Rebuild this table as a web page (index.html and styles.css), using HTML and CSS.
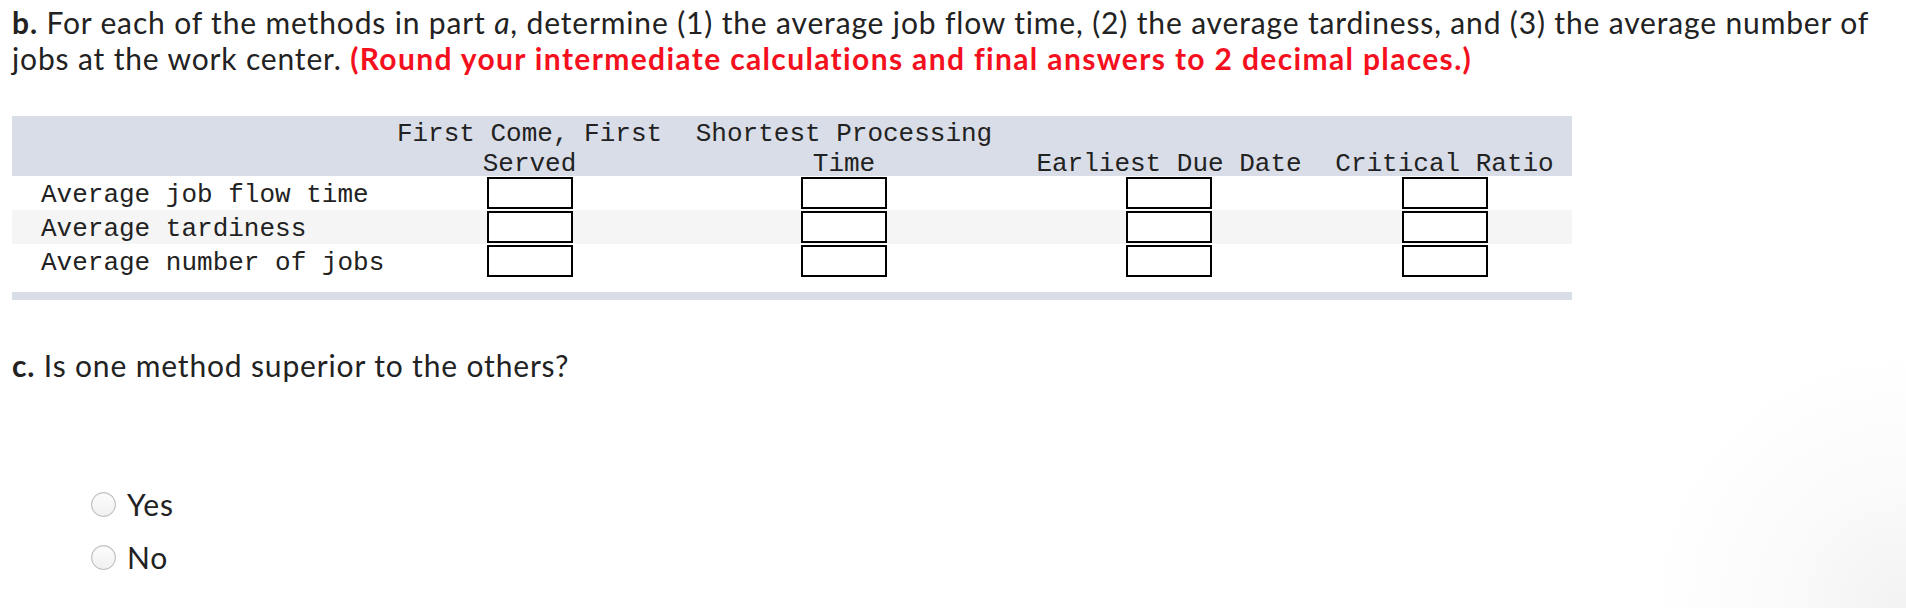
FILE: index.html
```html
<!DOCTYPE html>
<html>
<head>
<meta charset="utf-8">
<link rel="stylesheet" href="styles.css">
</head>
<body>
<div class="page">
  <p class="question intro"><b>b.</b> <span>For each of the methods in part</span> <i>a</i><span>, determine (1) the average job flow time, (2) the average tardiness, and (3) the average number of</span><br><span>jobs at the work center.</span> <span class="note">(Round your intermediate calculations and final answers to 2 decimal places.)</span></p>

  <div class="table">
    <div class="head">
      <div class="hcell label"></div>
      <div class="hcell">First Come, First<br>Served</div>
      <div class="hcell">Shortest Processing<br>Time</div>
      <div class="hcell">Earliest Due Date</div>
      <div class="hcell">Critical Ratio</div>
    </div>
    <div class="row">
      <div class="cell label">Average job flow time</div>
      <div class="cell"><span class="box"></span></div>
      <div class="cell"><span class="box"></span></div>
      <div class="cell"><span class="box"></span></div>
      <div class="cell"><span class="box"></span></div>
    </div>
    <div class="row alt">
      <div class="cell label">Average tardiness</div>
      <div class="cell"><span class="box"></span></div>
      <div class="cell"><span class="box"></span></div>
      <div class="cell"><span class="box"></span></div>
      <div class="cell"><span class="box"></span></div>
    </div>
    <div class="row">
      <div class="cell label">Average number of jobs</div>
      <div class="cell"><span class="box"></span></div>
      <div class="cell"><span class="box"></span></div>
      <div class="cell"><span class="box"></span></div>
      <div class="cell"><span class="box"></span></div>
    </div>
    <div class="foot"></div>
  </div>

  <p class="question part-c"><b>c.</b> Is one method superior to the others?</p>

  <div class="options">
    <label class="option"><span class="radio"></span>Yes</label>
    <label class="option"><span class="radio"></span>No</label>
  </div>
</div>
</body>
</html>
```

FILE: styles.css
```css
html, body {
  margin: 0;
  padding: 0;
  background: #fff;
}
body {
  width: 1906px;
  height: 608px;
  overflow: hidden;
  background: radial-gradient(circle at 100% 100%, rgba(0,0,0,0.05) 0, rgba(0,0,0,0.02) 120px, rgba(0,0,0,0) 260px), #fff;
  font-family: "Lato", "Open Sans", sans-serif;
  color: #222;
}
.page {
  padding: 4px 12px 0 12px;
}
.question {
  margin: 0;
  font-size: 30px;
  line-height: 36px;
  letter-spacing: 0.85px;
}
.intro {
  width: 1890px;
}
.question b {
  font-weight: 700;
}
.note {
  color: #f5101e;
  font-weight: 700;
  letter-spacing: 1.35px;
}
.table {
  margin-top: 40px;
  width: 1560px;
  font-family: "Courier New", "Liberation Mono", monospace;
  font-size: 26px;
  color: #222;
}
.head, .row {
  display: grid;
  grid-template-columns: 368px 299px 330px 320px 231px 12px;
}
.head {
  background: #d9dde8;
  height: 60px;
  align-items: end;
}
.hcell {
  text-align: center;
  line-height: 30px;
  white-space: nowrap;
  margin-bottom: -3px;
}
.row {
  height: 34px;
  align-items: center;
}
.row.alt {
  background: #f5f5f5;
}
.cell {
  display: flex;
  justify-content: center;
  align-items: center;
  white-space: nowrap;
}
.cell.label {
  justify-content: flex-start;
  padding-left: 29px;
  padding-top: 3px;
}
.box {
  display: block;
  width: 82px;
  height: 28px;
  border: 2px solid #000;
  background: #fff;
}
.foot {
  margin-top: 14px;
  height: 8px;
  background: #d9dde8;
}
.part-c {
  margin-top: 47px;
}
.options {
  margin-top: 103px;
  padding-left: 79px;
  display: flex;
  flex-direction: column;
  gap: 17px;
}
.option {
  display: flex;
  align-items: center;
  font-size: 30px;
  letter-spacing: 0.85px;
  line-height: 36px;
  height: 36px;
}
.radio {
  width: 23px;
  height: 23px;
  border-radius: 50%;
  border: 1px solid #b5b5b5;
  background: linear-gradient(#fdfdfd, #f0f0f0);
  box-shadow: inset 0 1px 1px rgba(0,0,0,0.08);
  margin-right: 11px;
  flex: none;
}
```
